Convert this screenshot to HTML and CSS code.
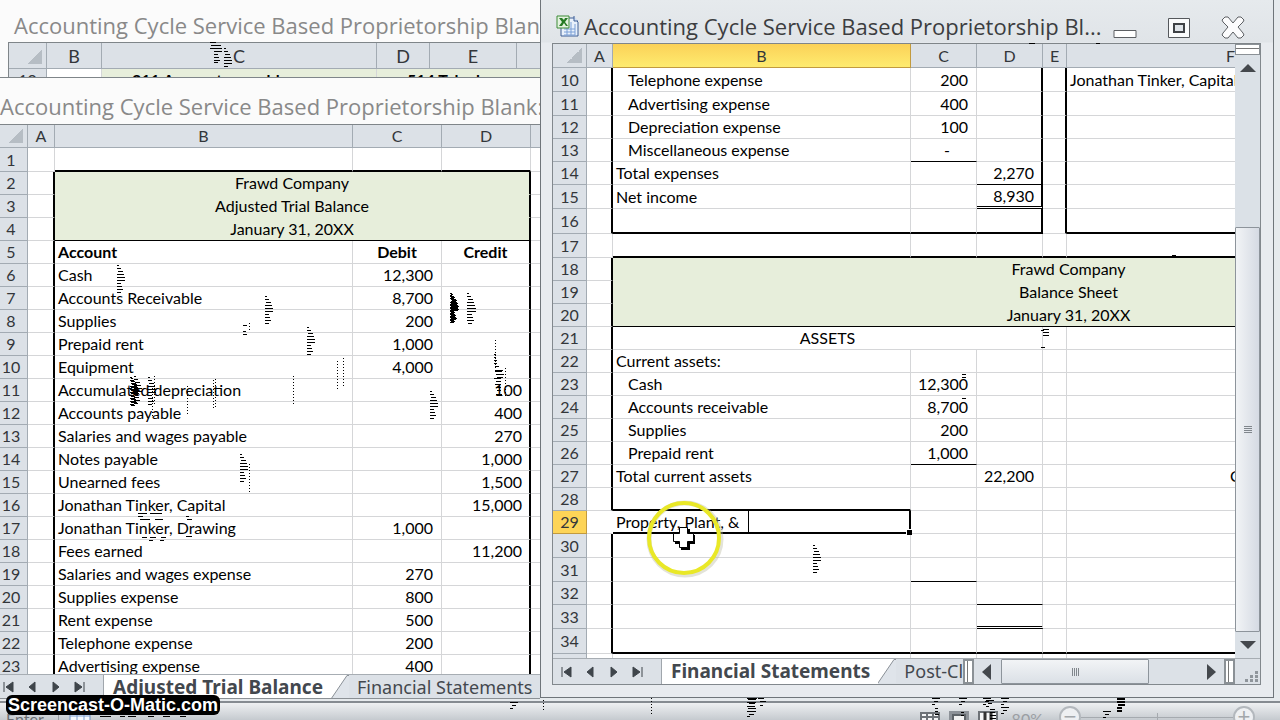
FILE: index.html
```html
<!DOCTYPE html>
<html lang="en">
  <head>
    <meta charset="UTF-8" />
    <meta name="viewport" content="width=device-width, initial-scale=1.0" />
    <title>Accounting Cycle Service Based Proprietorship Blank</title>
    <link rel="stylesheet" href="styles.css">
  </head>
  <body>
    <div class="desktop">
      <div class="left-side">
        <section class="window window-back">
          <h2 class="title">Accounting Cycle Service Based Proprietorship Blank:1</h2>
          <div class="sheet">
            <table class="grid grid-back">
              <colgroup><col class="w38"><col class="w55"><col class="w275"><col class="w53"><col class="w87"><col class="w87"></colgroup>
              <thead>
                <tr><th class="corner"></th><th>B</th><th>C</th><th>D</th><th>E</th><th></th></tr>
              </thead>
              <tbody>
                <tr><th>10</th><td></td><td class="chart"><b>211 Accounts payable</b></td><td class="chart" colspan="3"><b>514 Telephone expense</b></td></tr>
              </tbody>
            </table>
          </div>
        </section>

        <section class="window window-trial">
          <h2 class="title">Accounting Cycle Service Based Proprietorship Blank:</h2>
          <div class="sheet">
            <table class="grid grid-trial">
              <colgroup><col class="w28"><col class="w27"><col class="w298"><col class="w89"><col class="w89"><col class="w55"></colgroup>
              <thead>
                <tr><th class="corner"></th><th>A</th><th>B</th><th>C</th><th>D</th><th></th></tr>
              </thead>
              <tbody>
                <tr class="tall"><th>1</th><td></td><td class="thick-b"></td><td class="thick-b"></td><td class="thick-b"></td><td></td></tr>
                <tr><th>2</th><td class="thick-r"></td><td class="banner thick-r" colspan="3">Frawd Company</td><td></td></tr>
                <tr><th>3</th><td class="thick-r"></td><td class="banner thick-r" colspan="3">Adjusted Trial Balance</td><td></td></tr>
                <tr><th>4</th><td class="thick-r"></td><td class="banner thick-r line-b" colspan="3">January 31, 20XX</td><td></td></tr>
                <tr><th>5</th><td class="thick-r"></td><td><b>Account</b></td><td class="center"><b>Debit</b></td><td class="center thick-r"><b>Credit</b></td><td></td></tr>
                <tr><th>6</th><td class="thick-r"></td><td>Cash</td><td class="num">12,300</td><td class="num thick-r"></td><td></td></tr>
                <tr><th>7</th><td class="thick-r"></td><td>Accounts Receivable</td><td class="num">8,700</td><td class="num thick-r"></td><td></td></tr>
                <tr><th>8</th><td class="thick-r"></td><td>Supplies</td><td class="num">200</td><td class="num thick-r"></td><td></td></tr>
                <tr><th>9</th><td class="thick-r"></td><td>Prepaid rent</td><td class="num">1,000</td><td class="num thick-r"></td><td></td></tr>
                <tr><th>10</th><td class="thick-r"></td><td>Equipment</td><td class="num">4,000</td><td class="num thick-r"></td><td></td></tr>
                <tr><th>11</th><td class="thick-r"></td><td>Accumulated depreciation</td><td class="num"></td><td class="num thick-r">100</td><td></td></tr>
                <tr><th>12</th><td class="thick-r"></td><td>Accounts payable</td><td class="num"></td><td class="num thick-r">400</td><td></td></tr>
                <tr><th>13</th><td class="thick-r"></td><td>Salaries and wages payable</td><td class="num"></td><td class="num thick-r">270</td><td></td></tr>
                <tr><th>14</th><td class="thick-r"></td><td>Notes payable</td><td class="num"></td><td class="num thick-r">1,000</td><td></td></tr>
                <tr><th>15</th><td class="thick-r"></td><td>Unearned fees</td><td class="num"></td><td class="num thick-r">1,500</td><td></td></tr>
                <tr><th>16</th><td class="thick-r"></td><td>Jonathan Tinker, Capital</td><td class="num"></td><td class="num thick-r">15,000</td><td></td></tr>
                <tr><th>17</th><td class="thick-r"></td><td>Jonathan Tinker, Drawing</td><td class="num">1,000</td><td class="num thick-r"></td><td></td></tr>
                <tr><th>18</th><td class="thick-r"></td><td>Fees earned</td><td class="num"></td><td class="num thick-r">11,200</td><td></td></tr>
                <tr><th>19</th><td class="thick-r"></td><td>Salaries and wages expense</td><td class="num">270</td><td class="num thick-r"></td><td></td></tr>
                <tr><th>20</th><td class="thick-r"></td><td>Supplies expense</td><td class="num">800</td><td class="num thick-r"></td><td></td></tr>
                <tr><th>21</th><td class="thick-r"></td><td>Rent expense</td><td class="num">500</td><td class="num thick-r"></td><td></td></tr>
                <tr><th>22</th><td class="thick-r"></td><td>Telephone expense</td><td class="num">200</td><td class="num thick-r"></td><td></td></tr>
                <tr><th>23</th><td class="thick-r"></td><td>Advertising expense</td><td class="num">400</td><td class="num thick-r"></td><td></td></tr>
              </tbody>
            </table>
          </div>
          <div class="tabs">
            <div class="tab-nav">
              <button aria-label="First sheet"><svg width="12" height="12"><path d="M2 1v10M11 1v10L4 6z"/></svg></button>
              <button aria-label="Previous sheet"><svg width="12" height="12"><path d="M9 1v10L3 6z"/></svg></button>
              <button aria-label="Next sheet"><svg width="12" height="12"><path d="M3 1v10l6-5z"/></svg></button>
              <button aria-label="Last sheet"><svg width="12" height="12"><path d="M1 1v10l7-5zM10 1v10"/></svg></button>
            </div>
            <a class="tab active" href="#trial">Adjusted Trial Balance</a>
            <svg class="slant" width="18" height="24"><path d="M0 24L16 0H18V24z" fill="#dfe4ea"/><path d="M0 24L16 .5H18" fill="none" stroke="#8b9197"/></svg>
            <a class="tab" href="#statements">Financial Statements</a>
          </div>
        </section>
      </div>

      <section class="window window-front">
        <header class="titlebar">
          <svg class="book" width="24" height="24" viewBox="0 0 24 24">
            <path d="M5 4h13l4 4v14H5z" fill="#e9f1fb" stroke="#3f5f95"/>
            <path d="M18 2v5h4" fill="#cfdcf0" stroke="#3f5f95"/>
            <path d="M8 15h11M8 18h11M8 21h11M11 12v9M15 8v13M19 10v11" fill="none" stroke="#7b9fd6"/>
            <path d="M1 2h12v12H1z" fill="#e3f2df" stroke="#3d8b37"/>
            <path d="M3 4l3 4-3 4h3l2-3 2 3h2l-3-4 3-4H9L8 6 6 4z" fill="#257a24"/>
          </svg>
          <h1 class="title">Accounting Cycle Service Based Proprietorship Bl...</h1>
          <div class="controls">
            <button aria-label="Minimize"><svg width="26" height="26"><path d="M2 17.500h22v7H2z" fill="#fff" stroke="#5c5f63"/></svg></button>
            <button aria-label="Restore"><svg width="26" height="26"><path d="M2.500 5.500h21v19h-21z" fill="#fafbfc" stroke="#55585c"/><path d="M8 11h10v8H8z" fill="#dfe4e9" stroke="#3f4246" stroke-width="2"/></svg></button>
            <button aria-label="Close"><svg width="26" height="26"><path d="M2 7l3-3h3l5 6 5-6h3l3 3-1 2-5 5 5 6 1 2-3 3h-3l-5-6-5 6H5l-3-3 1-2 5-6-5-5z" fill="#fcfcfd" stroke="#5c5f63" stroke-linejoin="round"/></svg></button>
          </div>
        </header>

        <div class="workbook">
          <div class="sheet-area">
            <div class="sheet">
              <table class="grid grid-statements">
                <colgroup><col class="w34"><col class="w26"><col class="w298"><col class="w66"><col class="w66"><col class="w24"><col class="w328"><col class="w130"></colgroup>
                <thead>
                  <tr><th class="corner"></th><th>A</th><th class="selected">B</th><th>C</th><th>D</th><th>E</th><th>F</th><th>G</th></tr>
                </thead>
                <tbody>
                  <tr class="tall"><th>10</th><td class="thick-r"></td><td class="indent">Telephone expense</td><td class="num">200</td><td class="thick-r"></td><td class="thick-r"></td><td>Jonathan Tinker, Capital</td><td></td></tr>
                  <tr class="tall"><th>11</th><td class="thick-r"></td><td class="indent">Advertising expense</td><td class="num">400</td><td class="thick-r"></td><td class="thick-r"></td><td></td><td></td></tr>
                  <tr><th>12</th><td class="thick-r"></td><td class="indent">Depreciation expense</td><td class="num">100</td><td class="thick-r"></td><td class="thick-r"></td><td></td><td></td></tr>
                  <tr><th>13</th><td class="thick-r"></td><td class="indent">Miscellaneous expense</td><td class="dash line-b">-</td><td class="thick-r"></td><td class="thick-r"></td><td></td><td></td></tr>
                  <tr><th>14</th><td class="thick-r"></td><td>Total expenses</td><td></td><td class="num thick-r line-b">2,270</td><td class="thick-r"></td><td></td><td></td></tr>
                  <tr class="tall"><th>15</th><td class="thick-r"></td><td>Net income</td><td></td><td class="num thick-r double-b">8,930</td><td class="thick-r"></td><td></td><td></td></tr>
                  <tr class="taller"><th>16</th><td class="thick-r"></td><td class="thick-b"></td><td class="thick-b"></td><td class="thick-r thick-b"></td><td class="thick-r"></td><td class="thick-b"></td><td class="thick-b"></td></tr>
                  <tr class="tall"><th>17</th><td></td><td class="thick-b"></td><td class="thick-b"></td><td class="thick-b"></td><td class="thick-b"></td><td class="thick-b"></td><td class="thick-b"></td></tr>
                  <tr><th>18</th><td class="thick-r"></td><td class="banner" colspan="6">Frawd Company</td></tr>
                  <tr><th>19</th><td class="thick-r"></td><td class="banner" colspan="6">Balance Sheet</td></tr>
                  <tr><th>20</th><td class="thick-r"></td><td class="banner line-b" colspan="6">January 31, 20XX</td></tr>
                  <tr><th>21</th><td class="thick-r"></td><td class="center" colspan="3">ASSETS</td><td></td><td></td><td></td></tr>
                  <tr><th>22</th><td class="thick-r"></td><td>Current assets:</td><td></td><td></td><td></td><td></td><td></td></tr>
                  <tr><th>23</th><td class="thick-r"></td><td class="indent">Cash</td><td class="num">12,300</td><td></td><td></td><td></td><td></td></tr>
                  <tr><th>24</th><td class="thick-r"></td><td class="indent">Accounts receivable</td><td class="num">8,700</td><td></td><td></td><td></td><td></td></tr>
                  <tr><th>25</th><td class="thick-r"></td><td class="indent">Supplies</td><td class="num">200</td><td></td><td></td><td></td><td></td></tr>
                  <tr><th>26</th><td class="thick-r"></td><td class="indent">Prepaid rent</td><td class="num line-b">1,000</td><td></td><td></td><td></td><td></td></tr>
                  <tr><th>27</th><td class="thick-r"></td><td>Total current assets</td><td></td><td class="num">22,200</td><td></td><td class="heading-f">C</td><td></td></tr>
                  <tr><th>28</th><td class="thick-r"></td><td class="thick-b"></td><td></td><td></td><td></td><td></td><td></td></tr>
                  <tr><th class="selected">29</th><td class="edit-gap"></td><td class="editing"><input type="text" aria-label="Cell B29" value="Property, Plant, &amp;"></td><td></td><td></td><td></td><td></td><td></td></tr>
                  <tr class="tall"><th>30</th><td class="thick-r"></td><td></td><td></td><td></td><td></td><td></td><td></td></tr>
                  <tr class="tall"><th>31</th><td class="thick-r"></td><td></td><td class="line-b"></td><td></td><td></td><td></td><td></td></tr>
                  <tr><th>32</th><td class="thick-r"></td><td></td><td></td><td class="line-b"></td><td></td><td></td><td></td></tr>
                  <tr class="tall"><th>33</th><td class="thick-r"></td><td></td><td></td><td class="double-b"></td><td></td><td></td><td></td></tr>
                  <tr class="taller"><th>34</th><td class="thick-r"></td><td class="thick-b"></td><td class="thick-b"></td><td class="thick-b"></td><td class="thick-b"></td><td class="thick-b"></td><td class="thick-b"></td></tr>
                  <tr><th></th><td></td><td></td><td></td><td></td><td></td><td></td><td></td></tr>
                </tbody>
              </table>
            </div>
            <div class="vscroll">
              <div class="split"></div>
              <button aria-label="Scroll up"><svg width="16" height="8"><path d="M8 0l8 8H0z" fill="#44484d"/></svg></button>
              <div class="track"></div>
              <div class="thumb"><i class="grip"></i></div>
              <button aria-label="Scroll down"><svg width="16" height="8"><path d="M8 8l8-8H0z" fill="#44484d"/></svg></button>
            </div>
          </div>

          <div class="tabs">
            <div class="tab-nav">
              <button aria-label="First sheet"><svg width="12" height="12"><path d="M2 1v10M11 1v10L4 6z"/></svg></button>
              <button aria-label="Previous sheet"><svg width="12" height="12"><path d="M9 1v10L3 6z"/></svg></button>
              <button aria-label="Next sheet"><svg width="12" height="12"><path d="M3 1v10l6-5z"/></svg></button>
              <button aria-label="Last sheet"><svg width="12" height="12"><path d="M1 1v10l7-5zM10 1v10"/></svg></button>
            </div>
            <a class="tab active" href="#statements">Financial Statements</a>
            <svg class="slant" width="18" height="24"><path d="M0 24L16 0H18V24z" fill="#dfe4ea"/><path d="M0 24L16 .5H18" fill="none" stroke="#8b9197"/></svg>
            <a class="tab clipped" href="#post-closing">Post-Closing</a>
            <div class="hsplit"></div>
            <div class="hscroll">
              <button aria-label="Scroll left"><svg width="9" height="16"><path d="M0 8l9-8v16z" fill="#44484d"/></svg></button>
              <div class="thumb"><i class="grip"></i></div>
              <button aria-label="Scroll right"><svg width="9" height="16"><path d="M9 8L0 0v16z" fill="#44484d"/></svg></button>
            </div>
            <div class="hsplit"></div>
            <svg class="sizer" width="25" height="24"><path d="M20 12h3v3h-3zM20 16h3v3h-3zM20 20h3v3h-3zM15 16h3v3h-3zM15 20h3v3h-3zM10 20h3v3h-3z" fill="#8f959b"/></svg>
          </div>
        </div>
      </section>
    </div>

    <footer class="status">
      <span class="mode">Enter</span>
      <svg class="macro" width="22" height="18"><path d="M1 2h20v16H1z" fill="#f4f8fd" stroke="#6f8fbf"/><path d="M1 8h20M1 13h20M8 2v16M15 2v16" stroke="#7f9fd0"/><circle cx="6" cy="5" r="4" fill="#d05540"/></svg>
      <div class="views">
        <svg width="20" height="18"><path d="M1 10h18v10H1zM1 14h18M7 10v9M13 10v9" fill="#f5f6f7" stroke="#6d7277" stroke-width="2"/></svg>
        <svg width="20" height="18"><path d="M0 8h20v12H0z" fill="#8d9298"/><path d="M4 12h12v8H4z" fill="#f2f2f2" stroke="#5f6469" stroke-width="2"/></svg>
        <svg width="20" height="18"><path d="M1 9h18v11H1z" fill="#f5f6f7" stroke="#6d7277" stroke-width="2"/><path d="M7 9v9M13 9v9" stroke="#333" stroke-width="3"/></svg>
      </div>
      <span class="percent">80%</span>
      <button class="round" aria-label="Zoom out">−</button>
      <input class="zoom" type="range" aria-label="Zoom" min="10" max="190" value="100">
      <button class="round" aria-label="Zoom in">+</button>
    </footer>

    <!-- redraw noise and pointer, floating over everything -->
    <svg class="overlay" width="1280" height="720" aria-hidden="true">
      <defs>
        <path id="comb" d="M0 .5h2M0 3.500h4M1 6.500h5M0 9.500h7M0 12.500h8M0 15.500h8M0 18.500h4M0 21.500h5M0 24.500h6M0 27.500h4"/>
        <path id="dots" d="M.5 0v29" stroke-dasharray="1 2"/>
        <path id="dash" d="M0 .5h8M2 3.500h4M0 6.500h3"/>
      </defs>
      <g stroke="#000" fill="none">
        <path d="M210 42.500h6M211 45.500h10M210 48.500h12M214 51.500h8M214 54.500h4M214 57.500h5M214 60.500h6M214 62.500h4M224 48.500h2M224 51.500h4M225 54.500h5M224 57.500h7M224 60.500h8M224 63.500h8M224 66.500h4"/>
        <use href="#comb" x="117" y="265"/>
        <use href="#comb" x="265" y="296"/>
        <use href="#comb" x="307" y="327"/>
        <use href="#comb" x="430" y="391"/>
        <use href="#comb" x="240" y="454"/>
        <use href="#comb" x="813" y="545"/>
        <use href="#comb" x="467" y="293"/>
        <use href="#comb" x="468" y="296"/>
        <use href="#comb" x="450" y="293"/>
        <use href="#comb" x="451" y="294"/>
        <use href="#comb" x="450" y="295"/>
        <use href="#comb" x="130" y="377"/>
        <use href="#comb" x="131" y="378"/>
        <use href="#comb" x="134" y="376"/>
        <use href="#comb" x="148" y="377"/>
        <path d="M494 354.500h2M494 357.500h2M494 360.500h3M494 363.500h3M495 366.500h4M495 370.500h8M495 371.500h7M496 374.500h8M497 377.500h6M494 378.500h7M496 381.500h5M495 384.500h6M496 387.500h5M497 390.500h4M496 394.500h6"/>
        <use href="#dots" x="495" y="340"/>
        <use href="#dots" x="505" y="368"/>
        <use href="#dots" x="154" y="376"/>
        <use href="#dots" x="152" y="388"/>
        <use href="#dots" x="187" y="386"/>
        <use href="#dots" x="213" y="380"/>
        <use href="#dots" x="215" y="379"/>
        <use href="#dots" x="293" y="376"/>
        <use href="#dots" x="337" y="361"/>
        <use href="#dots" x="343" y="358"/>
        <use href="#dots" x="249" y="464"/>
        <path d="M243 325.500h4M243 331.500h3M243 334.500h4"/>
        <path d="M249.500 323v9" stroke-dasharray="1 2"/>
        <path d="M138 513.500h9M150 513.500h12M138 516.500h5M140 519.500h10M155 519.500h8M186 516.500h3M187 519.500h5M142 537.500h5M150 537.500h6M161 537.500h5M186 536.500h6M149 540.500h4M160 540.500h4"/>
        <path d="M1041 330.500h3M1043 329.500h6M1043 332.500h6M1043 335.500h6M1041 347.500h4M962 374.500h4M962 377.500h4M962 398.500h4M1172 255.500h4M1029 43.500h6M1096 43.500h4"/>
        <path d="M543.500 700v12M651.500 698v16" stroke-dasharray="1 2"/>
        <path d="M747 698.500h10M748 699.500h8M747 702.500h9M749 703.500h6M747 706.500h8M748 708.500h8M747 711.500h9M749 714.500h5M747 716.500h3M758 698.500h6M760 701.500h6M760 705.500h3"/>
        <use href="#dash" x="510" y="702"/>
        <use href="#dash" x="932" y="698"/>
        <use href="#dash" x="959" y="698"/>
        <use href="#dash" x="983" y="698"/>
        <use href="#dash" x="986" y="700"/>
        <use href="#dash" x="1001" y="698"/>
        <use href="#dash" x="1001" y="707"/>
        <path d="M990 709.500h5M990 712.500h5M990 715.500h6M990 718.500h6M935 708.500h3M935 711.500h3M935 714.500h4M961 712.500h3M961 715.500h3"/>
        <use href="#dash" x="1103" y="711"/>
        <path d="M1117 699h8M1117 702h8M1118 705h7M1117 708h5M1117 711h5" stroke-width="2"/>
        <path d="M100 716.500h11M120 716.500h5M128 716.500h8M148 716.500h6M163 716.500h7M180 716.500h6"/>
      </g>
      <circle cx="685" cy="539" r="36" fill="none" stroke="#b9b9a0" stroke-opacity=".4" stroke-width="5"/>
      <circle cx="684" cy="538" r="35" fill="none" stroke="#e9e827" stroke-width="4"/>
      <path d="M681 529h9v6h5v9h-5v6h-9v-6h-6v-9h6z"/>
      <path d="M679.500 527.500h8v6h6v8h-6v6h-8v-6h-6v-8h6z" fill="#fff" stroke="#000"/>
    </svg>
    <div class="watermark">Screencast-O-Matic.com</div>
  </body>
</html>
```
FILE: styles.css
```css
* {
  box-sizing: border-box;
}
body {
  margin: 0;
  height: 100vh;
  display: flex;
  flex-direction: column;
  overflow: hidden;
  position: relative;
  background: #e6eaed;
  font-family: Lato, "Liberation Sans", sans-serif;
  font-size: 16px;
  color: #000;
}
button {
  border: 0;
  padding: 0;
  background: none;
  display: flex;
  align-items: center;
  justify-content: center;
}

/* windows */
.desktop {
  flex: 1;
  min-height: 0;
  display: grid;
  grid-template-columns: 27fr 37fr;
  grid-template-rows: minmax(0, 1fr);
}
.left-side {
  min-width: 0;
  min-height: 0;
  display: flex;
  flex-direction: column;
  overflow: hidden;
}
.window {
  min-width: 0;
  display: flex;
  flex-direction: column;
}
.title {
  margin: 0;
  font-family: "Open Sans", "Noto Sans", sans-serif;
  font-size: 22px;
  font-weight: 400;
  line-height: 32px;
  white-space: nowrap;
  color: #898989;
}
.window-back {
  flex: 0 0 78px;
  overflow: hidden;
  background: #fbfbfb;
  border-bottom: 1px solid #7f8589;
}
.window-back .title {
  padding: 9px 0 1px 14px;
}
.window-back .sheet {
  margin-left: 8px;
  border-left: 1px solid #7f8589;
}
.window-trial {
  flex: 1;
  min-height: 0;
  margin-bottom: 2px;
  background: #fbfbfb;
  border-bottom: 1px solid #8b9095;
}
.window-trial .title {
  padding: 12px 0 2px;
}
.window-front {
  min-height: 0;
  margin-right: 6px;
  margin-bottom: 3px;
  padding: 0 12px 12px 11px;
  border: 1px solid #6f757a;
  border-width: 0 1px 1px 1px;
  background: linear-gradient(#e6eaed, #e0e4e8 42px, #e8ebef 43px);
}
.titlebar {
  flex: 0 0 43px;
  display: flex;
  align-items: center;
  padding: 8px 4px 0 4px;
}
.titlebar .title {
  flex: 1;
  min-width: 0;
  padding-left: 4px;
  overflow: hidden;
  color: #3c3d40;
}
.controls {
  display: flex;
  gap: 28px;
  margin-right: 11px;
}
.workbook {
  flex: 1;
  min-height: 0;
  display: flex;
  flex-direction: column;
  border: 1px solid #82888d;
  border-top: 0;
}
.sheet-area {
  flex: 1;
  min-height: 0;
  display: flex;
}
.sheet {
  flex: 1;
  min-width: 0;
  min-height: 0;
  overflow: hidden;
  background: #fff;
  border-top: 1px solid #7f8589;
}

/* spreadsheet grid */
.grid {
  table-layout: fixed;
  width: 0;
  border-collapse: separate;
  border-spacing: 0;
}
.w24 { width: 24px; }
.w26 { width: 26px; }
.w27 { width: 27px; }
.w28 { width: 28px; }
.w34 { width: 34px; }
.w38 { width: 38px; }
.w53 { width: 53px; }
.w55 { width: 55px; }
.w66 { width: 66px; }
.w87 { width: 87px; }
.w89 { width: 89px; }
.w130 { width: 130px; }
.w275 { width: 275px; }
.w298 { width: 298px; }
.w328 { width: 328px; }
.grid th,
.grid td {
  height: 23px;
  padding: 0 3px;
  line-height: 20px;
  white-space: nowrap;
  border: 0 solid #d5d6d8;
  border-width: 0 1px 1px 0;
}
.grid th {
  padding: 0;
  font-weight: 400;
  color: #33363a;
  background: #dce1e7;
  border-color: #a3abb3;
}
.grid-trial tbody th {
  padding-right: 5px;
}
.grid .tall th,
.grid .tall td {
  height: 24px;
}
.grid .taller th,
.grid .taller td {
  height: 25px;
}
.grid-statements thead th {
  height: 24px;
}
.grid-back thead th {
  height: 26px;
  font-size: 18px;
}
.grid .corner {
  background: linear-gradient(135deg, transparent 50%, #b6bdc4 50%) right 4px bottom 4px / 15px 15px no-repeat #dce1e7;
}
.grid th.selected {
  background: linear-gradient(#fbd158, #feeb6f);
  border-color: #c29a3e;
}
.grid tbody th.selected {
  background: #fdd457;
}
.grid .center,
.grid .banner {
  text-align: center;
}
.grid .banner {
  background: #e7eedb;
  border-bottom-color: #e7eedb;
}
.grid .chart {
  background: #e7eedb;
  padding-left: 30px;
}
.grid .num {
  text-align: right;
  padding-right: 8px;
}
.grid .num.thick-r {
  padding-right: 7px;
}
.grid .dash {
  text-align: right;
  padding-right: 26px;
}
.grid .indent {
  padding-left: 15px;
}
.grid .heading-f {
  padding-left: 163px;
}
.grid .thick-r {
  border-right: 2px solid #000;
}
.grid .thick-b {
  border-bottom: 2px solid #000;
}
.grid .line-b {
  border-bottom: 1px solid #000;
}
.grid .double-b {
  border-bottom: 3px double #000;
}
.grid .edit-gap {
  border-right: 2px solid #fff;
}
.grid .editing {
  position: relative;
  padding: 0;
  border-right: 2px solid #000;
  border-bottom: 2px solid #000;
}
.editing::after {
  content: "";
  position: absolute;
  right: -3px;
  bottom: -3px;
  width: 5px;
  height: 5px;
  background: #000;
  border: 1px solid #fff;
  border-width: 1px 0 0 1px;
}
.editing input {
  display: block;
  width: 136px;
  height: 21px;
  padding: 0 0 0 3px;
  border: 0;
  border-right: 1px solid #000;
  background: #fff;
  font: inherit;
  outline: 0;
}

/* scroll bars */
.vscroll {
  flex: 0 0 25px;
  display: flex;
  flex-direction: column;
  background: #dbe1e7;
  border-top: 1px solid #7f8589;
}
.vscroll .split {
  height: 11px;
  border: 1px solid #8b9196;
  background: linear-gradient(#fff 3px, #777 3px, #777 4px, #fff 4px);
}
.vscroll button {
  height: 26px;
}
.vscroll .track {
  flex: 147;
}
.vscroll .thumb {
  flex: 406;
}
.thumb {
  display: flex;
  align-items: center;
  justify-content: center;
  border: 1px solid #8d949b;
  border-radius: 1px;
  background: linear-gradient(90deg, #f2f4f6, #d5dae3);
}
.vscroll .grip {
  width: 8px;
  height: 7px;
  background: repeating-linear-gradient(#80868c 0 1px, transparent 1px 2px);
}

/* sheet tabs */
.tabs {
  flex: 0 0 24px;
  display: flex;
  overflow: hidden;
  background: #dce1e7;
  border-top: 1px solid #a7adb3;
}
.window-front .tabs {
  flex-basis: 26px;
}
.tab-nav {
  flex: 0 0 104px;
  display: flex;
  align-items: center;
  gap: 12px;
  padding-left: 2px;
  border-right: 1px solid #a0a6ac;
}
.window-front .tab-nav {
  flex-basis: 109px;
  padding-left: 7px;
}
.tab-nav path {
  fill: #3f454b;
  stroke: #3f454b;
}
.tab {
  flex: none;
  padding-left: 8px;
  font-family: "Noto Sans", sans-serif;
  font-size: 18px;
  line-height: 24px;
  white-space: nowrap;
  color: #43484e;
  text-decoration: none;
}
.tab.active {
  padding: 0 8px 0 9px;
  font-size: 19px;
  font-weight: 700;
  background: #fff;
}
.slant {
  flex: none;
  background: #fff;
}
.tab.clipped {
  flex: 0 0 67px;
  overflow: hidden;
}
.hsplit {
  flex: 0 0 11px;
  border: 2px solid #8b9196;
  background: linear-gradient(90deg, #fff 2px, #777 2px, #777 3px, #fff 3px);
}
.hscroll {
  flex: 1;
  display: flex;
  justify-content: space-between;
  padding: 0 8px;
}
.hscroll .thumb {
  flex: 0 0 148px;
  margin-right: auto;
  margin-left: 10px;
  background: linear-gradient(#f2f4f6, #dbe0e6);
}
.hscroll .grip {
  width: 7px;
  height: 8px;
  background: repeating-linear-gradient(90deg, #80868c 0 1px, transparent 1px 2px);
}
.sizer {
  flex: none;
}

/* status bar */
.status {
  flex: 0 0 19px;
  display: flex;
  align-items: flex-start;
  overflow: hidden;
  padding: 0 25px 0 6px;
  border-top: 2px solid #858b91;
  background: linear-gradient(#eef0f2, #c5cacf);
  color: #6a6e73;
}
.mode {
  width: 53px;
  margin-right: 10px;
  line-height: 32px;
  border-right: 1px solid #9a9fa5;
}
.views {
  margin-left: auto;
  display: flex;
  gap: 9px;
}
.percent {
  margin: 0 16px 0 14px;
  line-height: 32px;
  color: #9a9ea3;
}
.round {
  flex: none;
  width: 22px;
  height: 22px;
  margin-top: 3px;
  border: 2px solid #b3b8bd;
  border-radius: 50%;
  background: #eef0f2;
  color: #a3a7ab;
  font-size: 22px;
  line-height: 18px;
}
.zoom {
  appearance: none;
  width: 152px;
  height: 8px;
  margin: 10px 0 0;
  background: linear-gradient(#a5aaaf, #a5aaaf) center / 100% 1px no-repeat,
    linear-gradient(#a5aaaf, #a5aaaf) center / 1px 8px no-repeat;
}
.zoom::-webkit-slider-thumb {
  appearance: none;
  width: 1px;
  height: 8px;
}

.overlay {
  position: absolute;
  top: 0;
  left: 0;
  pointer-events: none;
}
.watermark {
  position: absolute;
  left: 6px;
  bottom: 5px;
  padding: 0 2px;
  border-radius: 6px;
  background: #000;
  color: #fff;
  font: bold 18px/20px "Liberation Sans", Arial, sans-serif;
}
```
